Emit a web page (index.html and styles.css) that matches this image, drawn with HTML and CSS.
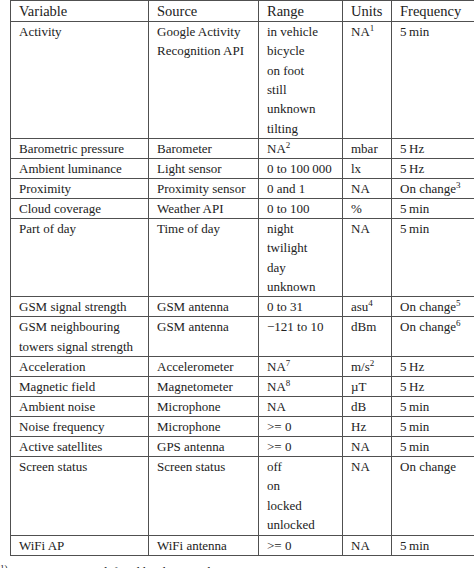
FILE: index.html
```html
<!DOCTYPE html>
<html>
<head>
<meta charset="utf-8">
<link rel="stylesheet" href="styles.css">
</head>
<body>
<table class="vars">
<colgroup>
<col class="c1"><col class="c2"><col class="c3"><col class="c4"><col class="c5">
</colgroup>
<thead>
<tr><th>Variable</th><th>Source</th><th>Range</th><th>Units</th><th>Frequency</th></tr>
</thead>
<tbody>
<tr>
<td>Activity</td>
<td><div class="ln">Google Activity</div><div class="ln">Recognition API</div></td>
<td><div class="ln">in vehicle</div><div class="ln">bicycle</div><div class="ln">on foot</div><div class="ln">still</div><div class="ln">unknown</div><div class="ln">tilting</div></td>
<td>NA<sup>1</sup></td>
<td>5&#8201;min</td>
</tr>
<tr><td>Barometric pressure</td><td>Barometer</td><td>NA<sup>2</sup></td><td>mbar</td><td>5&#8201;Hz</td></tr>
<tr><td>Ambient luminance</td><td>Light sensor</td><td>0 to 100&#8201;000</td><td>lx</td><td>5&#8201;Hz</td></tr>
<tr><td>Proximity</td><td>Proximity sensor</td><td>0 and 1</td><td>NA</td><td>On change<sup>3</sup></td></tr>
<tr><td>Cloud coverage</td><td>Weather API</td><td>0 to 100</td><td>%</td><td>5&#8201;min</td></tr>
<tr>
<td>Part of day</td><td>Time of day</td>
<td><div class="ln">night</div><div class="ln">twilight</div><div class="ln">day</div><div class="ln">unknown</div></td>
<td>NA</td><td>5&#8201;min</td>
</tr>
<tr><td>GSM signal strength</td><td>GSM antenna</td><td>0 to 31</td><td>asu<sup>4</sup></td><td>On change<sup>5</sup></td></tr>
<tr>
<td><div class="ln">GSM neighbouring</div><div class="ln">towers signal strength</div></td>
<td>GSM antenna</td><td>&minus;121 to 10</td><td>dBm</td><td>On change<sup>6</sup></td>
</tr>
<tr><td>Acceleration</td><td>Accelerometer</td><td>NA<sup>7</sup></td><td>m/s<sup>2</sup></td><td>5&#8201;Hz</td></tr>
<tr><td>Magnetic field</td><td>Magnetometer</td><td>NA<sup>8</sup></td><td>&micro;T</td><td>5&#8201;Hz</td></tr>
<tr><td>Ambient noise</td><td>Microphone</td><td>NA</td><td>dB</td><td>5&#8201;min</td></tr>
<tr><td>Noise frequency</td><td>Microphone</td><td>&gt;= 0</td><td>Hz</td><td>5&#8201;min</td></tr>
<tr><td>Active satellites</td><td>GPS antenna</td><td>&gt;= 0</td><td>NA</td><td>5&#8201;min</td></tr>
<tr>
<td>Screen status</td><td>Screen status</td>
<td><div class="ln">off</div><div class="ln">on</div><div class="ln">locked</div><div class="ln">unlocked</div></td>
<td>NA</td><td>On change</td>
</tr>
<tr><td>WiFi AP</td><td>WiFi antenna</td><td>&gt;= 0</td><td>NA</td><td>5&#8201;min</td></tr>
</tbody>
</table>
<p class="foot"><sup>1)</sup> Activity types as defined by the Google Activity Recognition API</p>
</body>
</html>
```
FILE: styles.css
```css
html, body {
  margin: 0;
  padding: 0;
  background: #ffffff;
  overflow: hidden;
}
body {
  font-family: "Liberation Serif", "Times New Roman", serif;
  color: #222222;
  width: 474px;
  height: 568px;
}
.vars {
  border-collapse: collapse;
  table-layout: fixed;
  width: 481px;
  margin: 0 0 0 10px;
  font-size: 13px;
}
.c1 { width: 138px; }
.c2 { width: 110px; }
.c3 { width: 84px; }
.c4 { width: 49px; }
.c5 { width: 100px; }
.vars th, .vars td {
  border: 1px solid #505050;
  padding: 0 0 0 8px;
  text-align: left;
  vertical-align: top;
  white-space: nowrap;
  line-height: 19px;
}
.vars th {
  font-weight: normal;
  font-size: 14.5px;
  line-height: 20px;
  border-top: 1.5px solid #505050;
}
.ln {
  line-height: 19.35px;
}
.vars sup {
  font-size: 9px;
  line-height: 0;
  vertical-align: 5px;
}
.foot {
  margin: 8px 0 0 0;
  font-size: 13px;
  line-height: 16px;
  color: #222222;
}
.foot sup {
  font-size: 9px;
  vertical-align: 5px;
  line-height: 0;
}
```
